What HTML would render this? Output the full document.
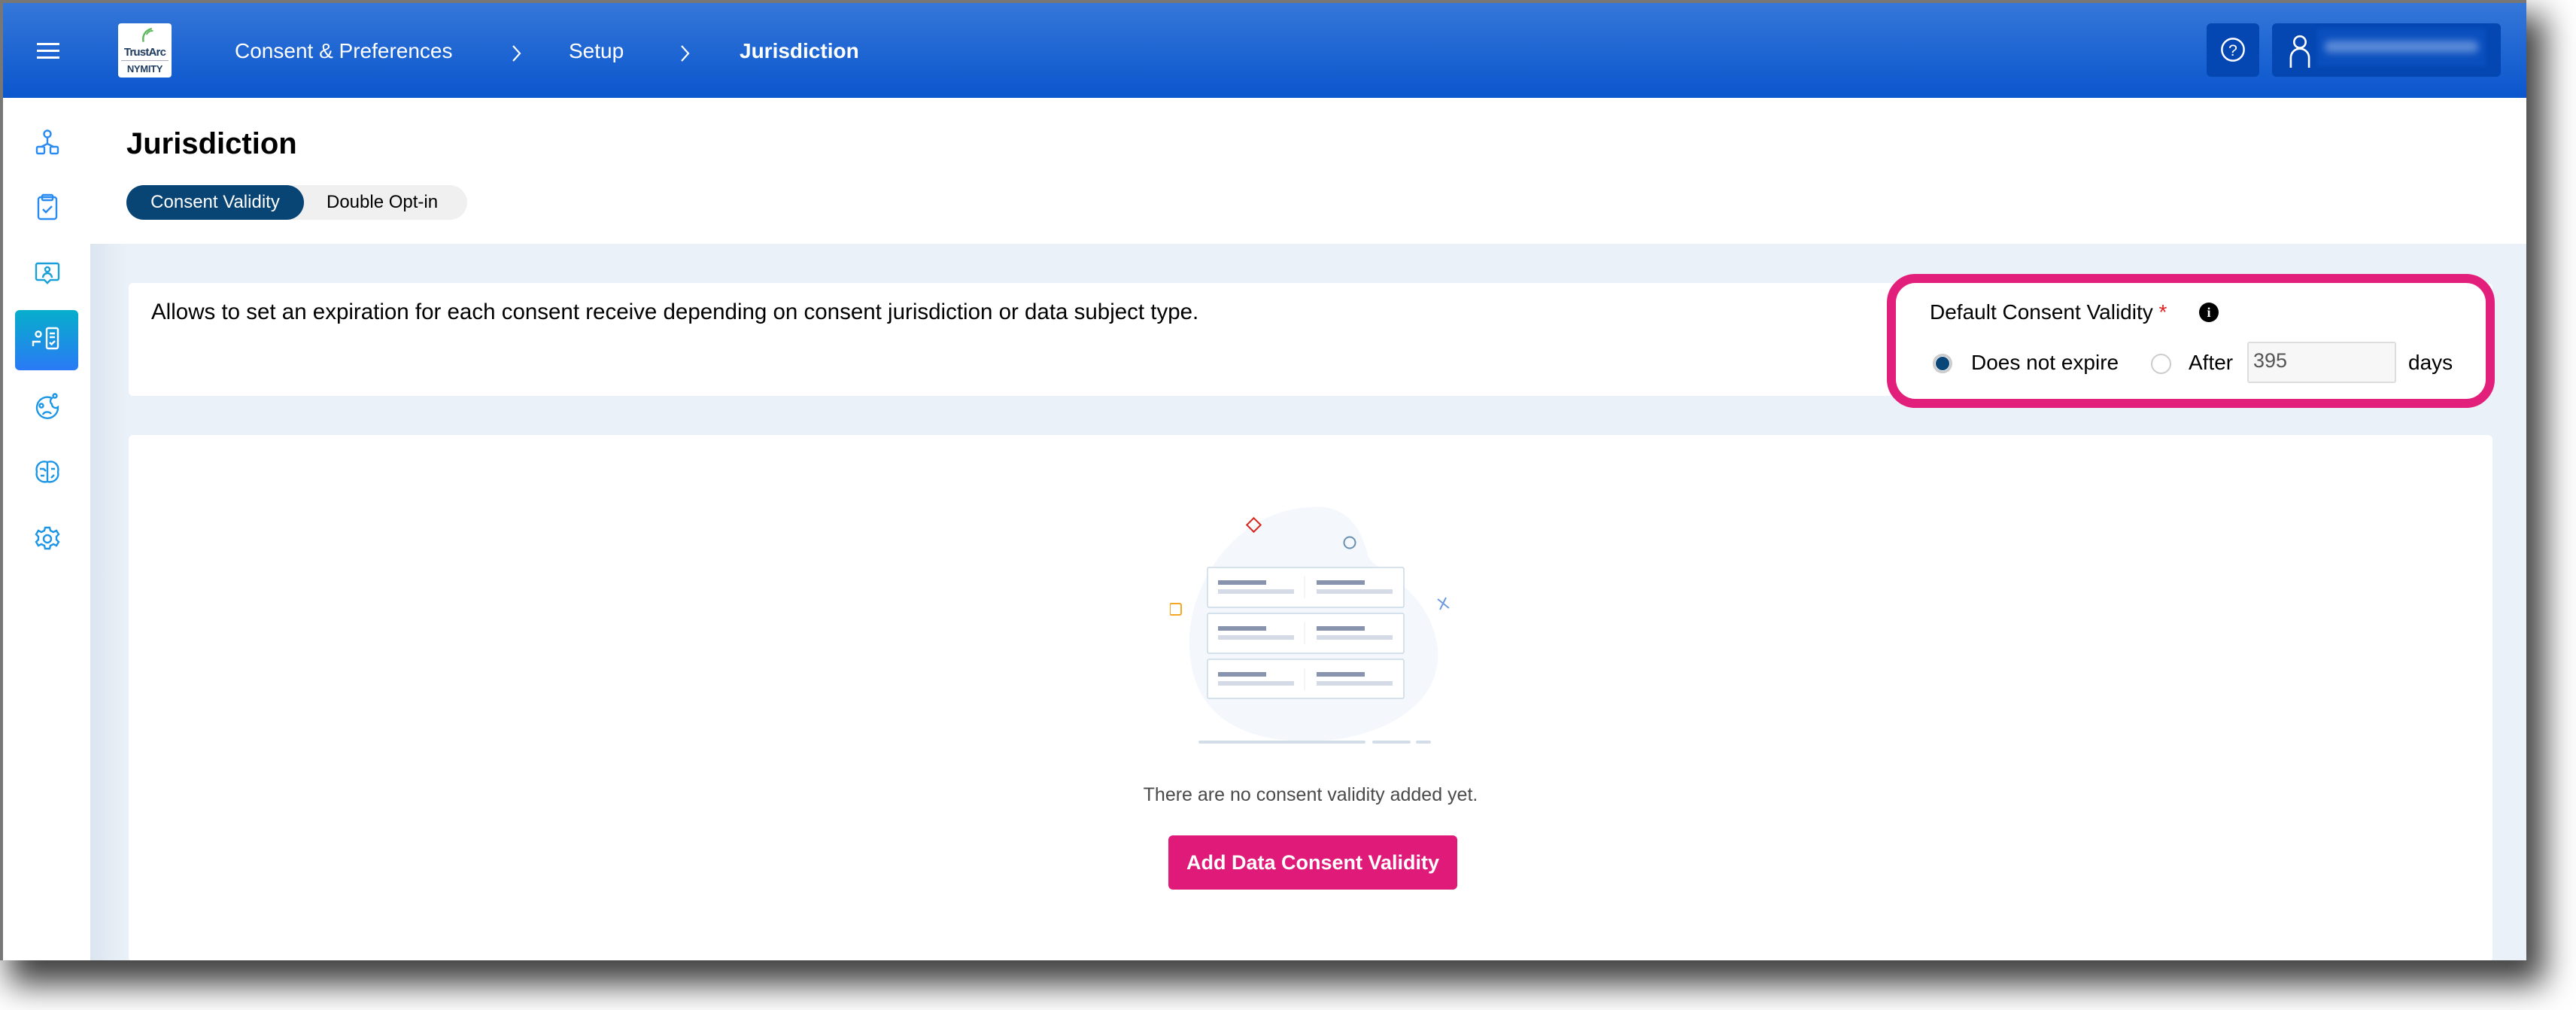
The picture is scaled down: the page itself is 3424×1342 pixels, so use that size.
<!DOCTYPE html>
<html><head><meta charset="utf-8"><style>
*{margin:0;padding:0;box-sizing:border-box}
html,body{width:3424px;height:1342px;background:#fff;overflow:hidden;font-family:"Liberation Sans",sans-serif;color:#000}
.win{position:absolute;left:0;top:0;width:3358px;height:1276px;background:#ebf1f8;border-top:4px solid #777;border-left:4px solid #777;box-shadow:18px 26px 40px 6px rgba(0,0,0,.75);overflow:hidden}
.hdr{position:absolute;left:0;top:0;right:0;height:126px;background:linear-gradient(#3577d9,#0a56cd)}
.abs{position:absolute}
.crumb{position:absolute;top:48px;color:#fff;font-size:28px;white-space:nowrap}
.side{position:absolute;left:0;top:126px;width:116px;bottom:0;background:#fff}
.top{position:absolute;left:116px;top:126px;right:0;height:194px;background:#fff}
.shade{position:absolute;left:116px;top:320px;width:50px;bottom:0;background:linear-gradient(90deg,#dbe5f0,#ebf1f8)}
.card{position:absolute;background:#fff;border-radius:6px}
.ic{position:absolute;left:41px;width:36px;height:36px}
</style></head><body>
<div class="win">
 <div class="hdr">
  <div class="abs" style="left:45px;top:53px;width:30px;height:3px;background:#fff;box-shadow:0 9px 0 #fff,0 18px 0 #fff"></div>
  <div class="abs" style="left:153px;top:27px;width:71px;height:72px;background:#fff;border-radius:4px;text-align:center">
   <svg width="24" height="22" style="margin-top:4px" viewBox="0 0 30 26"><path d="M12 25 C10 14 15 6 26 3" stroke="#5cb85c" stroke-width="3" fill="none"/><path d="M17 13 C20 8 24 6 28 7" stroke="#5cb85c" stroke-width="2.5" fill="none"/></svg>
   <div style="font-size:15px;color:#1e3a5f;line-height:15px;letter-spacing:-.8px;font-weight:bold">TrustArc</div>
   <div style="border-top:1.5px solid #aab;margin:3px 4px 3px"></div>
   <div style="font-size:13px;color:#1e3a5f;font-weight:bold;letter-spacing:-.3px">NYMITY</div>
  </div>
  <div class="crumb" style="left:308px">Consent &amp; Preferences</div>
  <svg class="abs" style="left:676px;top:56px" width="13" height="22" viewBox="0 0 13 22"><path d="M2 1 L11 11 L2 21" stroke="#fff" stroke-width="2.2" fill="none"/></svg>
  <div class="crumb" style="left:752px">Setup</div>
  <svg class="abs" style="left:900px;top:56px" width="13" height="22" viewBox="0 0 13 22"><path d="M2 1 L11 11 L2 21" stroke="#fff" stroke-width="2.2" fill="none"/></svg>
  <div class="crumb" style="left:979px;font-weight:bold">Jurisdiction</div>
  <div class="abs" style="left:2929px;top:27px;width:70px;height:71px;background:#0447b3;border-radius:6px">
   <svg class="abs" style="left:17px;top:17px" width="36" height="36" viewBox="0 0 32 32"><circle cx="16" cy="16" r="13" stroke="#fff" stroke-width="2.2" fill="none"/><text x="16" y="23" font-size="19" fill="#fff" text-anchor="middle" font-family="Liberation Sans">?</text></svg>
  </div>
  <div class="abs" style="left:3016px;top:27px;width:304px;height:71px;background:#0447b3;border-radius:6px">
   <svg class="abs" style="left:20px;top:15px" width="34" height="44" viewBox="0 0 30 40"><circle cx="15" cy="9" r="7" stroke="#fff" stroke-width="2.4" fill="none"/><path d="M4 40 V28 a11 11 0 0 1 22 0 V40" stroke="#fff" stroke-width="2.4" fill="none"/></svg>
   <div class="abs" style="left:60px;top:7px;width:224px;height:50px;background:#0a4fbe;filter:blur(3px)"><div style="margin:16px 10px;height:16px;background:#5b8ad8;border-radius:6px;filter:blur(4px)"></div></div>
  </div>
 </div>
 <div class="side">
  <svg class="ic" style="top:41px" viewBox="0 0 36 36" fill="none" stroke="#2a8bf0" stroke-width="2.4"><circle cx="18" cy="7" r="4.5"/><path d="M18 12 v8 M18 20 l-8 4 M18 20 l8 4"/><rect x="4" y="24" width="10" height="9" rx="1.5"/><rect x="22" y="24" width="10" height="9" rx="1.5"/></svg>
  <svg class="ic" style="top:127px" viewBox="0 0 36 36" fill="none" stroke="#2a8bf0" stroke-width="2.4"><rect x="6" y="5" width="24" height="29" rx="3"/><rect x="11" y="2" width="14" height="7" rx="1.5"/><path d="M12 21 l4 4 l8 -8"/></svg>
  <svg class="ic" style="top:215px" viewBox="0 0 36 36" fill="none" stroke="#1aa0d8" stroke-width="2.4"><path d="M14 27 H5 a2 2 0 0 1 -2 -2 V7 a2 2 0 0 1 2 -2 H31 a2 2 0 0 1 2 2 V25 a2 2 0 0 1 -2 2 H22 L18 31 Z"/><circle cx="18" cy="13" r="3"/><path d="M12 24 a6 6 0 0 1 12 0"/></svg>
  <div class="abs" style="left:16px;top:282px;width:84px;height:80px;border-radius:6px;background:linear-gradient(#06aecb,#2a7af5)">
   <svg class="abs" style="left:22px;top:22px" width="40" height="36" viewBox="0 0 40 36" fill="none" stroke="#fff" stroke-width="2.4"><circle cx="9" cy="10" r="3.5"/><path d="M2 26 v-6 h10"/><rect x="20" y="2" width="15" height="27" rx="2"/><path d="M24 9 h7 M24 14 h7 M24 21 l2.5 2.5 l4.5 -4.5"/></svg>
  </div>
  <svg class="ic" style="top:391px" viewBox="0 0 36 36" fill="none" stroke="#1e96e6" stroke-width="2.4"><path d="M24 8 a14 14 0 1 0 8 12 a5 5 0 0 1 -8 -4 a5 5 0 0 1 0 -8Z"/><circle cx="28" cy="5" r="2.5"/><circle cx="10" cy="18" r="2.5"/><path d="M12 30 a6 5 0 0 1 11 -1"/></svg>
  <svg class="ic" style="top:479px" viewBox="0 0 36 36" fill="none" stroke="#1e96e6" stroke-width="2.4"><path d="M18 5 C8 2 2 10 4 18 C2 26 9 33 18 31 C27 33 34 26 32 18 C34 10 28 2 18 5Z M18 5 V31 M8 14 h5 l3 3 M28 14 h-5 M9 23 h5 M27 22 l-4 4"/></svg>
  <svg class="ic" style="top:568px" viewBox="0 0 36 36" fill="none" stroke="#1e96e6" stroke-width="2.4"><circle cx="18" cy="18" r="5"/><path d="M15 3 h6 l1 4 l4 2 l4 -2 l3 5 l-3 3 v4 l3 3 l-3 5 l-4 -2 l-4 2 l-1 4 h-6 l-1 -4 l-4 -2 l-4 2 l-3 -5 l3 -3 v-4 l-3 -3 l3 -5 l4 2 l4 -2 Z"/></svg>
 </div>
 <div class="top">
  <div class="abs" style="left:48px;top:39px;font-size:40px;font-weight:bold">Jurisdiction</div>
  <div class="abs" style="left:48px;top:116px;width:453px;height:46px;background:#f0f0f0;border-radius:23px"></div>
  <div class="abs" style="left:48px;top:116px;width:236px;height:46px;background:#084474;border-radius:23px;color:#fff;font-size:24px;line-height:46px;text-align:center">Consent Validity</div>
  <div class="abs" style="left:314px;top:116px;font-size:24px;line-height:46px">Double Opt-in</div>
 </div>
 <div class="shade"></div>
 <div class="card" style="left:167px;top:372px;width:3142px;height:150px">
  <div class="abs" style="left:30px;top:22px;font-size:29.5px">Allows to set an expiration for each consent receive depending on consent jurisdiction or data subject type.</div>
 </div>
 <div class="abs" style="left:2504px;top:360px;width:808px;height:178px;border:12px solid #e21f7a;border-radius:38px;background:#fff">
  <div class="abs" style="left:45px;top:23px;font-size:28px;white-space:nowrap">Default Consent Validity <span style="color:#e02020">*</span></div>
  <div class="abs" style="left:403px;top:26px;width:26px;height:26px;border-radius:50%;background:#000;color:#fff;font-size:18px;font-weight:bold;text-align:center;line-height:26px;font-family:'Liberation Serif',serif">i</div>
  <div class="abs" style="left:49px;top:94px;width:26px;height:26px;border-radius:50%;border:3px solid #ccc;background:#0a4677;box-shadow:inset 0 0 0 1px #fff"></div>
  <div class="abs" style="left:100px;top:90px;font-size:28px">Does not expire</div>
  <div class="abs" style="left:339px;top:94px;width:27px;height:27px;border-radius:50%;border:2px solid #ccc;background:#fff"></div>
  <div class="abs" style="left:389px;top:90px;font-size:28px">After</div>
  <div class="abs" style="left:467px;top:78px;width:198px;height:55px;border:2px solid #ddd;border-radius:3px;background:#f7f7f7;color:#555;font-size:27px;padding:8px 6px">395</div>
  <div class="abs" style="left:681px;top:90px;font-size:28px">days</div>
 </div>
 <div class="card" style="left:167px;top:574px;width:3142px;height:700px">
  <svg class="abs" style="left:1384px;top:82px" width="420" height="330" viewBox="1556 660 420 330">
   <path d="M1740 674 C1790 668 1810 700 1820 740 C1830 760 1900 780 1912 860 C1920 940 1830 985 1740 985 C1650 985 1585 950 1582 860 C1578 780 1640 680 1740 674Z" fill="#f4f8fd"/>
   <rect x="1661" y="691" width="13" height="13" transform="rotate(45 1667.5 697.5)" fill="none" stroke="#d9261c" stroke-width="2"/>
   <circle cx="1795" cy="721" r="7.5" fill="none" stroke="#6a8fb0" stroke-width="2"/>
   <rect x="1556" y="802" width="15" height="15" rx="2" fill="none" stroke="#f5a623" stroke-width="2"/>
   <path d="M1912 796 L1927 808 M1923 794 L1915 810" stroke="#6e9be0" stroke-width="2"/>
   <g fill="#fff" stroke="#c9d8e6" stroke-width="1.5">
    <rect x="1606" y="754" width="261" height="53" rx="2"/><rect x="1606" y="815" width="261" height="53" rx="2"/><rect x="1606" y="876" width="261" height="52" rx="2"/>
   </g>
   <g fill="#8893ad"><rect x="1620" y="771" width="64" height="6"/><rect x="1751" y="771" width="64" height="6"/><rect x="1620" y="832" width="64" height="6"/><rect x="1751" y="832" width="64" height="6"/><rect x="1620" y="893" width="64" height="6"/><rect x="1751" y="893" width="64" height="6"/></g>
   <g fill="#d5dbe6"><rect x="1620" y="783" width="101" height="6"/><rect x="1751" y="783" width="101" height="6"/><rect x="1620" y="844" width="101" height="6"/><rect x="1751" y="844" width="101" height="6"/><rect x="1620" y="905" width="101" height="6"/><rect x="1751" y="905" width="101" height="6"/></g>
   <g stroke="#eef1f5" stroke-width="1.5"><path d="M1735 766 V795 M1735 827 V856 M1735 888 V917"/></g>
   <g stroke="#d3dde8" stroke-width="4" stroke-linecap="round"><path d="M1596 986 H1814 M1827 986 H1874 M1885 986 H1901"/></g>
  </svg>
  <div class="abs" style="left:0;right:0;top:464px;text-align:center;font-size:25px;color:#4a4a4a">There are no consent validity added yet.</div>
  <div class="abs" style="left:1382px;top:532px;width:384px;height:72px;background:#e01a78;border-radius:6px;color:#fff;font-size:27px;font-weight:bold;line-height:72px;text-align:center">Add Data Consent Validity</div>
 </div>
</div>
</body></html>
